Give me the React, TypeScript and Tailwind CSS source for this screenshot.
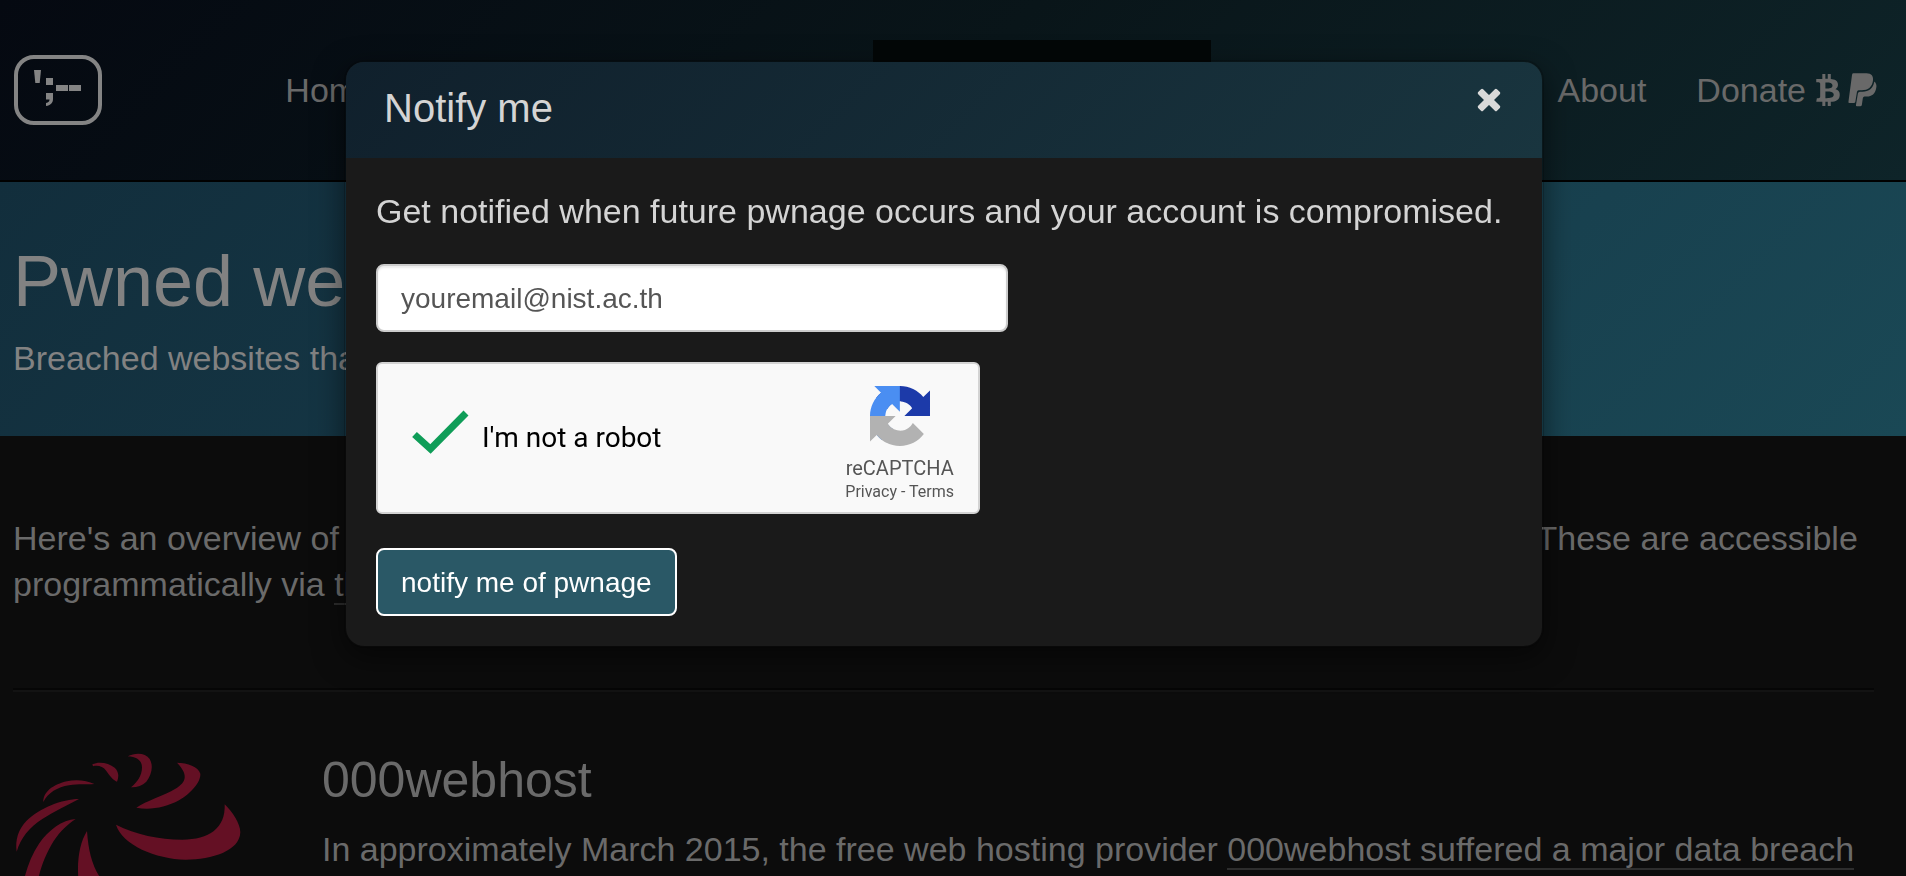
import React from "react";
import { FaBtc } from "react-icons/fa";

const navItems = [
  { label: "Home" },
  { label: "Notify me" },
  { label: "Domain search" },
  { label: "Who's been pwned", active: true },
  { label: "Passwords" },
  { label: "API" },
  { label: "About" },
];

function Logo() {
  return (
    <svg viewBox="0 0 88 70" className="h-[70px] w-[88px]" aria-hidden="true">
      <rect x="2" y="2" width="84" height="66" rx="18" fill="none" stroke="#848484" strokeWidth="4" />
      <g fill="#848484">
        <path d="M20 15h7l-1.300 13h-4.400z" />
        <rect x="32" y="23" width="7" height="7" />
        <path d="M32 38h7v6c0 4-2.500 6.500-7 7v-3c2.500-.5 3.500-1.500 3.500-3.500H32z" />
        <rect x="42" y="30" width="12" height="6" />
        <rect x="55" y="30" width="12" height="6" />
      </g>
    </svg>
  );
}

function PaypalIcon() {
  return (
    <svg viewBox="144 38 88 104" className="ml-1 h-[34px] w-[29px]" fill="currentColor" aria-hidden="true">
      <path d="M160 39H200C216 39 222 48 220 62C217 82 205 91 186 91H176Q172 91 171 96L166 127Q165 130 162 130H148Q144 130 145 126L156 43Q157 39 160 39Z" />
      <path d="M224 64C230 69 232 76 230 84C227 102 217 110 201 110H194Q190 110 189 115L186 136Q185 140 181 140H171Q167 140 168 136L174 100Q175 95 180 95H188C207 95 221 85 224 64Z" />
    </svg>
  );
}

function CloseIcon() {
  return (
    <svg viewBox="-12 -12 24 24" className="size-6" fill="#d9d9d9" aria-hidden="true">
      <rect x="-13.300" y="-3.500" width="26.600" height="7" rx="1.500" transform="rotate(45)" />
      <rect x="-13.300" y="-3.500" width="26.600" height="7" rx="1.500" transform="rotate(-45)" />
    </svg>
  );
}

function Swirl() {
  return (
    <svg viewBox="42 36 696 372" className="h-[124px] w-[232px] shrink-0" fill="#641024" aria-hidden="true">
      <path d="M280 70C300 60 330 66 347 80C360 92 360 108 354 122C342 118 332 104 322 90C312 76 296 72 282 76Z" />
      <path d="M386 46C410 34 440 36 452 54C464 74 458 102 442 122C430 134 412 140 396 139C416 122 428 104 429 80C429 60 416 48 386 46Z" />
      <path d="M534 65C566 66 598 76 604 98C606 124 574 158 540 178C500 200 452 208 412 200C440 180 500 162 528 144C566 122 566 98 534 65Z" />
      <path d="M677 190C700 212 724 248 724 274C722 330 640 356 560 356C470 354 370 312 351 251C410 280 480 296 550 296C630 296 680 262 677 190Z" />
      <path d="M286 129C264 118 230 114 204 121C164 130 132 152 133 183C146 156 176 138 210 133C240 128 262 131 286 129Z" />
      <path d="M240 174C190 174 120 202 82 240C58 266 48 296 53 332C66 290 90 260 130 234C166 210 204 194 240 174Z" />
      <path d="M230 234C190 236 148 268 120 308C100 338 86 372 76 412H118C128 370 142 336 164 300C184 270 206 250 230 234Z" />
      <path d="M264 270C242 306 234 356 238 412H305C280 376 268 330 264 270Z" />
    </svg>
  );
}

function RecaptchaLogo() {
  return (
    <svg viewBox="0 0 64 64" className="size-15" aria-hidden="true">
      <path fill="#1c3aa9" d="M64 31.955l-.016-1.370V4.687l-7.160 7.160C50.965 4.674 42.033.094 32.033.094c-10.407 0-19.652 4.960-25.490 12.640l11.736 11.860a15.550 15.550 0 0 1 4.754-5.334c2.050-1.600 4.952-2.906 8.968-2.906.485 0 .860.057 1.135.163 4.976.393 9.288 3.140 11.828 7.124l-8.307 8.307L64 31.953" />
      <path fill="#4a8ef2" d="M31.862.094l-1.370.016H4.594l7.160 7.160C4.580 13.147 0 22.080 0 32.060c0 10.407 4.960 19.652 12.640 25.490L24.500 45.815a15.550 15.550 0 0 1-5.334-4.754c-1.600-2.050-2.906-4.952-2.906-8.968 0-.485.057-.860.163-1.135.393-4.976 3.140-9.288 7.124-11.828l8.307 8.307L31.860.095" />
      <path fill="#b2b2b2" d="M.001 32.060l.016 1.370v25.898l7.160-7.160c5.860 7.173 14.792 11.753 24.792 11.753 10.407 0 19.652-4.960 25.490-12.640L45.722 39.420a15.550 15.550 0 0 1-4.754 5.334c-2.050 1.600-4.952 2.906-8.968 2.906-.485 0-.860-.057-1.135-.163-4.976-.393-9.288-3.140-11.828-7.124l8.307-8.307c-10.522.040-22.400.066-27.295-.005" />
    </svg>
  );
}

function Header() {
  return (
    <header className="flex h-[182px] items-center border-b-2 border-black bg-linear-135 from-[#050911] via-[#091519] to-[#0e2429] pl-[14px]">
      <a href="#" aria-label="Home page" className="shrink-0">
        <Logo />
      </a>
      <nav className="ml-auto flex items-center whitespace-nowrap text-[34px] leading-[46px] text-[#696969]">
        {navItems.map((item) => (
          <a
            key={item.label}
            href="#"
            className={item.active ? "bg-[#030707] px-[25px] py-[27px]" : "px-[25px] py-[27px]"}
          >
            {item.label}
          </a>
        ))}
        <a href="#" className="flex items-center py-[27px] pl-[25px] pr-[29px]">
          Donate
          <FaBtc className="ml-[6px] size-8" aria-hidden="true" />
          <PaypalIcon />
        </a>
      </nav>
    </header>
  );
}

function NotifyDialog() {
  return (
    <div className="fixed inset-0 flex items-start justify-center pr-[18px] pt-[60px]">
      <div
        role="dialog"
        aria-labelledby="notify-title"
        className="w-[1200px] overflow-hidden rounded-[20px] border-2 border-black/20 bg-[#1a1a1a] bg-clip-padding text-[#d4d4d4] shadow-[0_10px_30px_rgba(0,0,0,0.5)]"
      >
        <div className="flex h-24 items-start justify-between bg-linear-135 from-[#10202c] to-[#19353f] pl-[38px] pr-[41px]">
          <h2 id="notify-title" className="pt-[23px] text-[40px] leading-[46px]">
            Notify me
          </h2>
          <button type="button" aria-label="Close" className="mt-[26px]">
            <CloseIcon />
          </button>
        </div>
        <form className="flex flex-col items-start p-[30px]" onSubmit={(e) => e.preventDefault()}>
          <label htmlFor="email" className="text-[34px] leading-[46px]">
            Get notified when future pwnage occurs and your account is compromised.
          </label>
          <input
            id="email"
            type="email"
            defaultValue="youremail@nist.ac.th"
            className="mt-[30px] h-[68px] w-[632px] rounded-lg border-2 border-[#ccc] bg-white px-[23px] pt-[2px] text-[28px] text-[#555] shadow-[inset_0_2px_2px_rgba(0,0,0,0.075)] outline-none"
          />
          <div className="mt-[30px] flex h-[152px] w-[604px] justify-between rounded-md border-2 border-[#d3d3d3] bg-[#f9f9f9] pl-[34px] pr-6 font-[Roboto,sans-serif]">
            <label className="flex items-center gap-[13px] text-[28px] text-black">
              <input type="checkbox" defaultChecked className="peer sr-only" />
              <svg viewBox="0 0 57 44" className="-mt-3 h-11 w-[57px]" aria-hidden="true">
                <path d="M2.500 24.500L18.500 39L54 3" fill="none" stroke="#0f9d58" strokeWidth="7" />
              </svg>
              I'm not a robot
            </label>
            <div className="flex flex-col items-center pt-[22px] text-[#555]">
              <RecaptchaLogo />
              <span className="mt-[10px] text-[20px] leading-6">reCAPTCHA</span>
              <span className="text-[16px] leading-6">
                <a href="#">Privacy</a> - <a href="#">Terms</a>
              </span>
            </div>
          </div>
          <button
            type="submit"
            className="mt-[34px] h-[68px] rounded-lg border-2 border-white bg-[#2a5866] px-[23px] pt-[2px] text-[28px] text-white"
          >
            notify me of pwnage
          </button>
        </form>
      </div>
    </div>
  );
}

export default function App() {
  return (
    <div className="h-screen overflow-hidden bg-[#0c0c0c] font-['Liberation_Sans',Arial,sans-serif] text-[34px] leading-[46px] text-[#6a6a6a]">
      <Header />
      <section className="bg-linear-135 from-[#122e3c] via-[#163a49] to-[#1a4855] px-[13px] pb-[55px] pt-[60px] text-[#828282]">
        <h1 className="text-[72px] leading-[79px]">Pwned websites</h1>
        <p className="mt-[14px]">Breached websites that have been loaded into this service</p>
      </section>
      <main className="pl-[13px] pr-8 pt-[79px]">
        <p>
          Here's an overview of the various publicly known breaches that have been consolidated into this site. These
          are accessible programmatically via{" "}
          <a href="#" className="border-b-2 border-[#2d2d2d]">
            the HIBP API
          </a>
          .
        </p>
        <hr className="mt-[81px] h-1 border-b-2 border-t-2 border-b-[#131313] border-t-[#060606]" />
        <article className="flex gap-[77px] pt-[61px]">
          <Swirl />
          <div>
            <h3 className="text-[50px] leading-[55px]">000webhost</h3>
            <p className="mt-[18px]">
              In approximately March 2015, the free web hosting provider{" "}
              <a href="#" className="border-b-2 border-[#2d2d2d]">
                000webhost suffered a major data breach
              </a>
            </p>
          </div>
        </article>
      </main>
      <NotifyDialog />
    </div>
  );
}
